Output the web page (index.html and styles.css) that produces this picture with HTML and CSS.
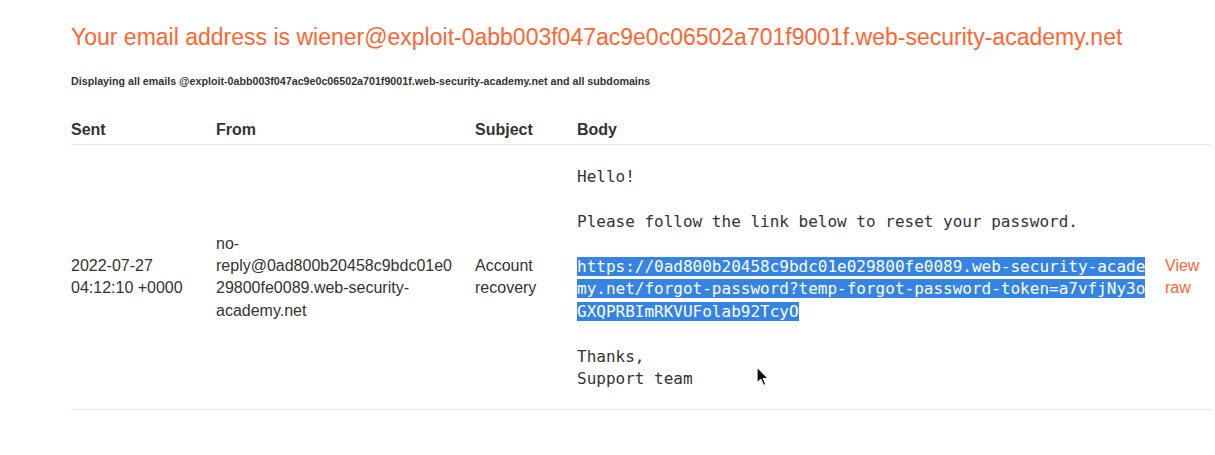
FILE: index.html
```html
<!DOCTYPE html>
<html lang="en">
<head>
<meta charset="utf-8">
<title>Exploit Server: Email client</title>
<link rel="stylesheet" href="styles.css">
</head>
<body>
<div class="page">
  <h1 class="address">Your email address is wiener@exploit-0abb003f047ac9e0c06502a701f9001f.web-security-academy.net</h1>
  <h6 class="note">Displaying all emails @exploit-0abb003f047ac9e0c06502a701f9001f.web-security-academy.net and all subdomains</h6>
  <table class="emails">
    <thead>
      <tr>
        <th class="col-sent">Sent</th>
        <th class="col-from">From</th>
        <th class="col-subject">Subject</th>
        <th class="col-body">Body</th>
        <th class="col-raw"></th>
      </tr>
    </thead>
    <tbody>
      <tr>
        <td>2022-07-27 04:12:10 +0000</td>
        <td>no-reply@0ad800b20458c9bdc01e029800fe0089.web-security-academy.net</td>
        <td>Account recovery</td>
        <td><pre class="mail-body">Hello!

Please follow the link below to reset your password.

<span class="selected">https://0ad800b20458c9bdc01e029800fe0089.web-security-academy.net/forgot-password?temp-forgot-password-token=a7vfjNy3oGXQPRBImRKVUFolab92TcyO</span>

Thanks,
Support team</pre></td>
        <td><a class="raw-link" href="#">View raw</a></td>
      </tr>
    </tbody>
  </table>
</div>
<svg class="cursor" width="14" height="22" viewBox="0 0 14 22" aria-hidden="true">
  <path d="M1 1 L1 17 L4.8 13.4 L7.6 19.6 L10 18.5 L7.3 12.5 L12.4 12.5 Z" fill="#111" stroke="#fff" stroke-width="1.2" stroke-linejoin="round"/>
</svg>
</body>
</html>
```

FILE: styles.css
```css
html, body {
  margin: 0;
  padding: 0;
  background: #ffffff;
}

body {
  font-family: "Liberation Sans", Arial, sans-serif;
  font-size: 16px;
  line-height: 1.4;
  color: #333332;
  position: relative;
  min-height: 455px;
}

.page {
  padding: 20px 4px 0 71px;
}

.address {
  margin: 0;
  font-size: 23px;
  font-weight: normal;
  line-height: 34px;
  color: #ff6633;
}

.note {
  margin: 20px 0 0;
  font-size: 10.7px;
  font-weight: bold;
  line-height: 15px;
  color: #333332;
}

.emails {
  margin-top: 25px;
  width: 100%;
  border-collapse: collapse;
  table-layout: fixed;
}

.emails th,
.emails td {
  box-sizing: border-box;
  padding: 4px 16px 4px 0;
  text-align: left;
  vertical-align: middle;
  overflow-wrap: break-word;
}

.emails th {
  font-weight: bold;
  padding-top: 5px;
  padding-bottom: 3px;
  border-bottom: 1px solid #e6e6e6;
}

.emails tbody tr {
  border-bottom: 1px solid #e6e6e6;
}

.col-sent { width: 145px; }
.col-from { width: 259px; }
.col-subject { width: 102px; }
.col-body { width: 588px; }

.emails th.col-raw,
.emails td:last-child {
  padding-right: 0;
}

.mail-body {
  margin: 17px 0 15px;
  font-family: "DejaVu Sans Mono", monospace;
  font-size: 16px;
  line-height: 22.4px;
  white-space: pre-wrap;
  word-break: break-all;
  color: #333332;
}

.selected {
  background: #3584e4;
  color: #ffffff;
}

.raw-link {
  color: #ff6633;
  text-decoration: none;
}

.cursor {
  position: absolute;
  left: 756px;
  top: 366px;
}
```
